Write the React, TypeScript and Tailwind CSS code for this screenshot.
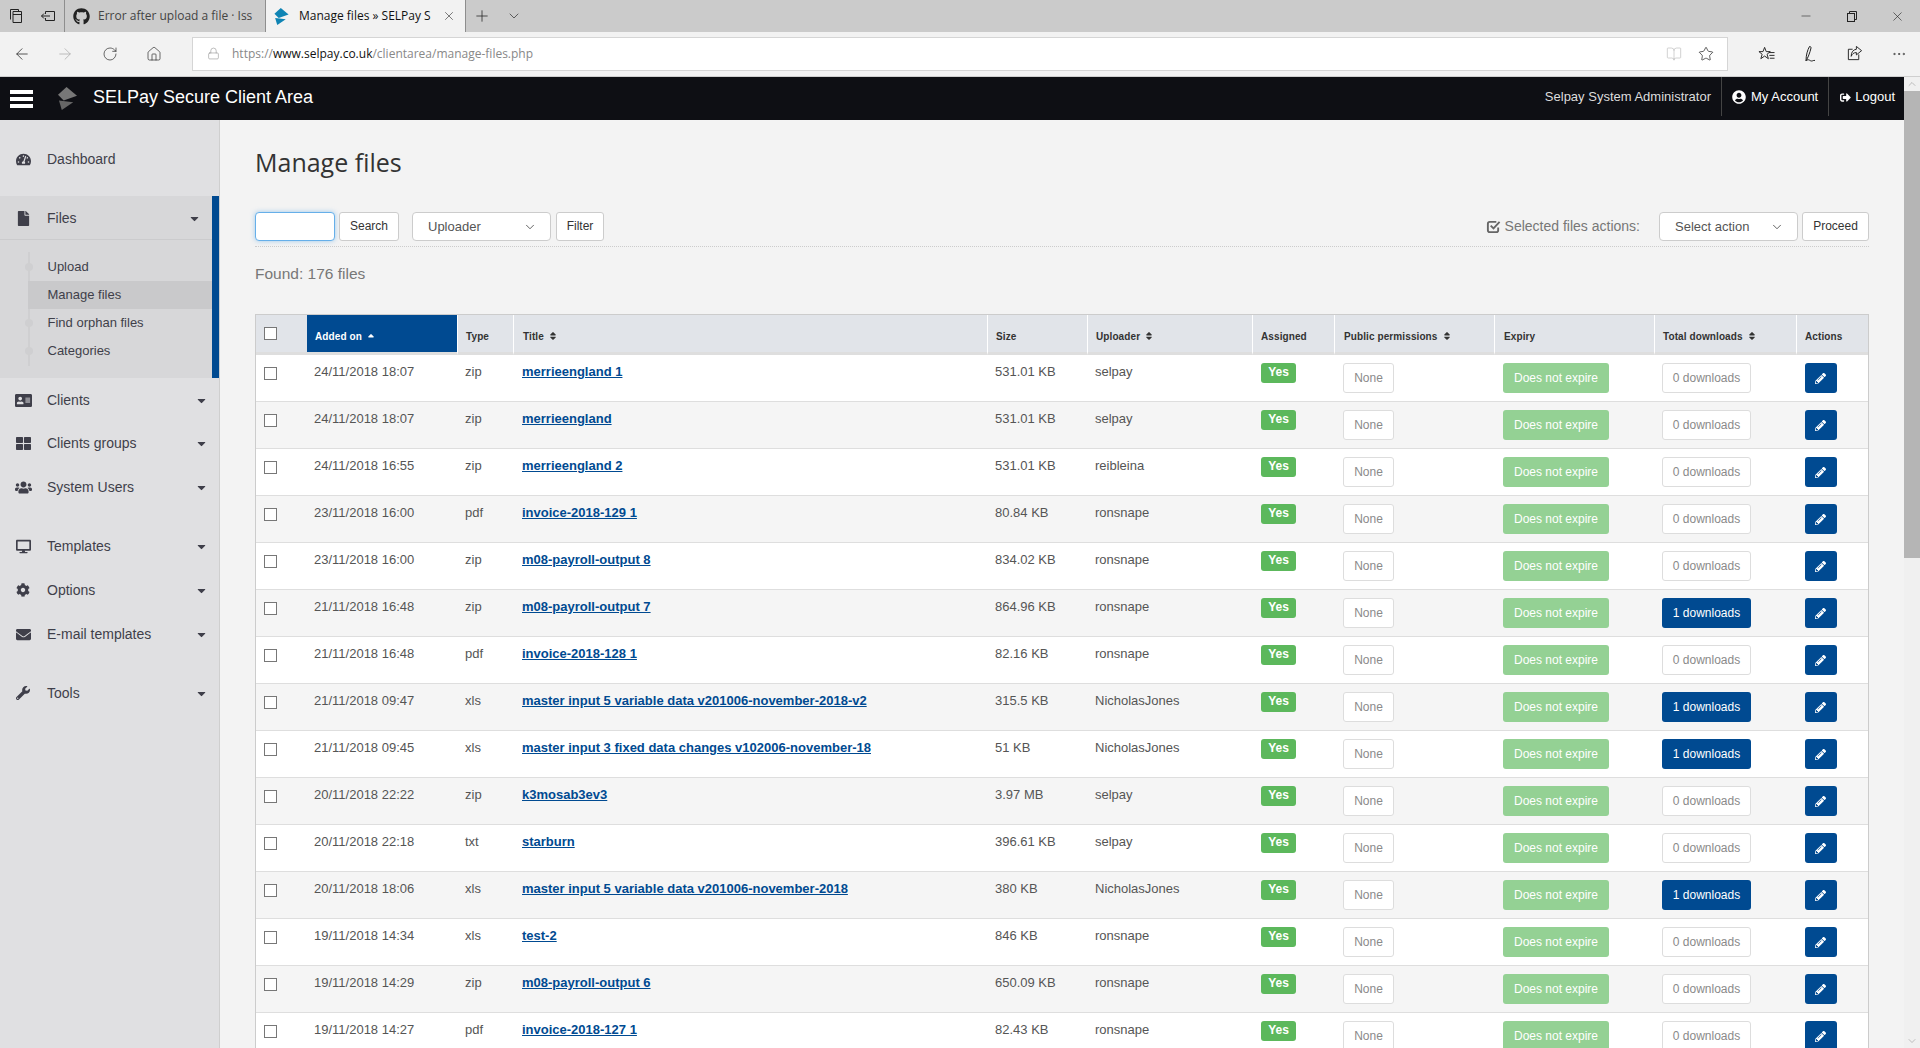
import {
  FaAddressCard,
  FaCaretDown,
  FaCog,
  FaDesktop,
  FaEnvelope,
  FaFile,
  FaGithub,
  FaPencilAlt,
  FaSort,
  FaSortUp,
  FaTachometerAlt,
  FaThLarge,
  FaUserCircle,
  FaUsers,
  FaWrench,
  FaSignOutAlt,
} from "react-icons/fa";
import {
  ArrowLeft,
  ArrowRight,
  BookOpen,
  ChevronDown,
  ChevronUp,
  Home,
  Lock,
  Minus,
  MoreHorizontal,
  Plus,
  RotateCw,
  Star,
  X,
} from "lucide-react";

const files = [
  ["24/11/2018 18:07", "zip", "merrieengland 1", "531.01 KB", "selpay", 0],
  ["24/11/2018 18:07", "zip", "merrieengland", "531.01 KB", "selpay", 0],
  ["24/11/2018 16:55", "zip", "merrieengland 2", "531.01 KB", "reibleina", 0],
  ["23/11/2018 16:00", "pdf", "invoice-2018-129 1", "80.84 KB", "ronsnape", 0],
  ["23/11/2018 16:00", "zip", "m08-payroll-output 8", "834.02 KB", "ronsnape", 0],
  ["21/11/2018 16:48", "zip", "m08-payroll-output 7", "864.96 KB", "ronsnape", 1],
  ["21/11/2018 16:48", "pdf", "invoice-2018-128 1", "82.16 KB", "ronsnape", 0],
  ["21/11/2018 09:47", "xls", "master input 5 variable data v201006-november-2018-v2", "315.5 KB", "NicholasJones", 1],
  ["21/11/2018 09:45", "xls", "master input 3 fixed data changes v102006-november-18", "51 KB", "NicholasJones", 1],
  ["20/11/2018 22:22", "zip", "k3mosab3ev3", "3.97 MB", "selpay", 0],
  ["20/11/2018 22:18", "txt", "starburn", "396.61 KB", "selpay", 0],
  ["20/11/2018 18:06", "xls", "master input 5 variable data v201006-november-2018", "380 KB", "NicholasJones", 1],
  ["19/11/2018 14:34", "xls", "test-2", "846 KB", "ronsnape", 0],
  ["19/11/2018 14:29", "zip", "m08-payroll-output 6", "650.09 KB", "ronsnape", 0],
  ["19/11/2018 14:27", "pdf", "invoice-2018-127 1", "82.43 KB", "ronsnape", 0],
] as const;

function Logo({ className, top, bottom }: { className: string; top: string; bottom: string }) {
  return (
    <svg viewBox="0 0 20 24" className={className}>
      <polygon points="9,0 20,9 6,14 0,8" fill={top} />
      <polygon points="1,14 16,16 4,24" fill={bottom} />
    </svg>
  );
}

// thin outline glyphs of the browser's own toolbar
function TabsIcon() {
  return (
    <svg viewBox="0 0 16 16" className="h-[16px] w-[16px]" fill="none" stroke="#222" strokeWidth="1">
      <path d="M2.5 11.5v-10h8v2" />
      <path d="M5 13v-9.5h8.5v11H5z" />
      <path d="M5 6.5h8.5" />
    </svg>
  );
}

function SetAsideIcon() {
  return (
    <svg viewBox="0 0 16 16" className="h-[16px] w-[16px]" fill="none" stroke="#222" strokeWidth="1">
      <path d="M5.5 3.5h9v9h-9V10" />
      <path d="M5.5 3.5V6" />
      <path d="M10 8H1.5M4 5.5 1.5 8 4 10.5" />
    </svg>
  );
}

function RestoreIcon() {
  return (
    <svg viewBox="0 0 12 12" className="h-[12px] w-[12px]" fill="none" stroke="#222" strokeWidth="1">
      <rect x="1.5" y="3.5" width="7" height="8" />
      <path d="M3.5 3.5v-2h7v8h-2" />
    </svg>
  );
}

function FavoritesIcon() {
  return (
    <svg viewBox="0 0 18 18" className="h-[17px] w-[17px]" fill="none" stroke="#222" strokeWidth="1">
      <path d="M7 2.5 8.7 7H13l-3.4 2.8L11 14.5 7 11.700 3 14.5l1.4-4.7L1 7h4.3z" />
      <path d="M11.5 8h6M12 11h5.5M12.5 14h5" />
    </svg>
  );
}

function NoteIcon() {
  return (
    <svg viewBox="0 0 18 18" className="h-[18px] w-[18px]" fill="none" stroke="#222" strokeWidth="1">
      <path d="M7.5 1.5C5.5 5 4 10 4 16c2-3.5 4-8.5 5-13 .2-1-1-2-1.5-1.5z" />
      <path d="M5 15c2-1 3 1 4.5 1 1.5 0 2-1 3.5-.5" />
    </svg>
  );
}

function ShareIcon() {
  return (
    <svg viewBox="0 0 18 18" className="h-[17px] w-[17px]" fill="none" stroke="#222" strokeWidth="1">
      <path d="M7 4.5H2.500v11h11V10" />
      <path d="M11 1.5 16.500 6 11 10.500V8C8 8 6.500 9.500 5.500 12c0-4.500 2-7 5.500-7.500z" />
    </svg>
  );
}

function CheckSquareIcon() {
  return (
    <svg viewBox="0 0 16 16" className="mr-[4px] h-[15px] w-[15px]" fill="none" stroke="#666" strokeWidth="2">
      <path d="M13 9v3a2 2 0 0 1-2 2H4a2 2 0 0 1-2-2V5a2 2 0 0 1 2-2h7" />
      <path d="M5 7l3 3 6.500-7" />
    </svg>
  );
}

function NavItem({
  icon,
  label,
  height = "h-[44px]",
  iconSize = "text-[15px]",
}: {
  icon: React.ReactNode;
  label: string;
  height?: string;
  iconSize?: string;
}) {
  return (
    <div className={`flex items-center text-[14px] text-[#3f3f4a] ${height}`}>
      <span className={`flex w-[47px] justify-center pr-[1px] ${iconSize}`}>{icon}</span>
      <span className="flex-1">{label}</span>
      {label !== "Dashboard" && <FaCaretDown className="mr-[11px] text-[13px] text-[#3f3f4a]" />}
    </div>
  );
}

function SubItem({ label, active = false }: { label: string; active?: boolean }) {
  return (
    <div
      className={`relative flex h-[28px] items-center text-[13px] text-[#3f3f4a] ${active ? "-ml-[2px] bg-[#c9c9cb] pl-[19.500px]" : "pl-[17.500px]"}`}
    >
      {!active && <span className="absolute left-[-5px] h-[8px] w-[8px] rounded-full bg-[#cfcfd1]" />}
      {label}
    </div>
  );
}

function Sidebar() {
  return (
    <aside className="w-[220px] shrink-0 border-r border-[#cfcfcf] bg-[#e0e0e2] pt-[17px]">
      <NavItem icon={<FaTachometerAlt />} label="Dashboard" />
      <div className="mt-[15px] h-[182px] border-r-[7px] border-[#004a91] bg-[#d7d7d9]">
        <div className="flex h-[44px] items-center border-b border-[#cbcbcd] pt-[1px] text-[14px] text-[#3f3f4a]">
          <span className="flex w-[47px] justify-center pr-[1px] text-[15px]">
            <FaFile />
          </span>
          <span className="flex-1">Files</span>
          <FaCaretDown className="mr-[11px] text-[13px]" />
        </div>
        <div className="ml-[28px] mt-[12px] border-l-2 border-[#cfcfd1] py-[1px]">
          <SubItem label="Upload" />
          <SubItem label="Manage files" active />
          <SubItem label="Find orphan files" />
          <SubItem label="Categories" />
        </div>
      </div>
      <NavItem icon={<FaAddressCard />} label="Clients" height="h-[43px] pt-[2px]" iconSize="text-[17px]" />
      <NavItem icon={<FaThLarge />} label="Clients groups" />
      <NavItem icon={<FaUsers />} label="System Users" iconSize="text-[17px]" />
      <div className="h-[15px]" />
      <NavItem icon={<FaDesktop />} label="Templates" />
      <NavItem icon={<FaCog />} label="Options" iconSize="text-[14px]" />
      <NavItem icon={<FaEnvelope />} label="E-mail templates" />
      <div className="h-[15px]" />
      <NavItem icon={<FaWrench />} label="Tools" iconSize="text-[14px]" />
    </aside>
  );
}

function SelectBox({ label }: { label: string }) {
  return (
    <div className="flex h-[29px] w-[139px] items-center justify-between rounded-[4px] border border-[#ccc] bg-white pl-[15px] pr-[13px] text-[13px] text-[#555]">
      {label}
      <ChevronDown size={14} strokeWidth={1.2} className="text-[#222]" />
    </div>
  );
}

function Btn({ label, className }: { label: string; className: string }) {
  return (
    <button
      className={`flex h-[29px] items-center justify-center rounded-[3px] border border-[#ccc] bg-white pb-[2px] text-[12px] text-[#333] ${className}`}
    >
      {label}
    </button>
  );
}

function Th({
  label,
  sort = false,
  className = "pl-[8px]",
}: {
  label: string;
  sort?: boolean;
  className?: string;
}) {
  return (
    <th
      className={`h-[40px] border-b-[3px] border-r border-b-[#dedede] border-r-white bg-[#e1e4e9] pt-[5px] text-left text-[10px] font-bold tracking-[0.1px] text-[#333] ${className}`}
    >
      <span className="inline-flex items-center gap-[4px]">
        {label}
        {sort && <FaSort className="text-[10px]" />}
      </span>
    </th>
  );
}

function FilesTable() {
  return (
    <div className="border-x border-t border-[#ccc]">
      <table className="w-full table-fixed border-separate border-spacing-0">
        <colgroup>
          <col className="w-[51px]" />
          <col className="w-[151px]" />
          <col className="w-[56px]" />
          <col className="w-[474px]" />
          <col className="w-[100px]" />
          <col className="w-[165px]" />
          <col className="w-[82px]" />
          <col className="w-[160px]" />
          <col className="w-[160px]" />
          <col className="w-[142px]" />
          <col className="w-[71px]" />
        </colgroup>
        <thead>
          <tr>
            <th className="h-[40px] border-b-[3px] border-b-[#dedede] bg-[#e1e4e9] pl-[8px] text-left">
              <div className="h-[13px] w-[13px] border border-[#777] bg-white" />
            </th>
            <th className="h-[40px] border-b-[3px] border-r border-b-[#dedede] border-r-white bg-[#004a91] pl-[8px] pt-[5px] text-left text-[10px] font-bold tracking-[0.1px] text-white">
              <span className="inline-flex items-center gap-[4px]">
                Added on
                <FaSortUp className="mt-[3px] text-[10px]" />
              </span>
            </th>
            <Th label="Type" />
            <Th label="Title" sort className="pl-[9px]" />
            <Th label="Size" />
            <Th label="Uploader" sort />
            <Th label="Assigned" />
            <Th label="Public permissions" sort className="pl-[9px]" />
            <Th label="Expiry" className="pl-[9px]" />
            <Th label="Total downloads" sort />
            <Th label="Actions" className="border-r-0 pl-[8px]" />
          </tr>
        </thead>
        <tbody>
          {files.map((file, index) => (
            <tr
              key={index}
              className={`text-[13px] leading-[18px] text-[#555] ${index % 2 ? "bg-[#f5f5f5]" : "bg-white"}`}
            >
              <td className="border-b border-[#dedede] px-[8px] pt-[12px] align-top">
                <div className="h-[13px] w-[13px] border border-[#777] bg-white" />
              </td>
              <td className="border-b border-[#dedede] px-[7px] py-[8px] align-top">{file[0]}</td>
              <td className="border-b border-[#dedede] px-[7px] py-[8px] align-top">{file[1]}</td>
              <td className="border-b border-[#dedede] px-[8px] py-[8px] align-top font-bold text-[#004a91] underline">
                {file[2]}
              </td>
              <td className="border-b border-[#dedede] px-[7px] py-[8px] align-top">{file[3]}</td>
              <td className="border-b border-[#dedede] px-[7px] py-[8px] align-top">{file[4]}</td>
              <td className="border-b border-[#dedede] px-[8px] py-[8px] align-top">
                <span className="flex h-[20px] w-[35px] items-center justify-center rounded-[3px] bg-[#5cb85c] pb-[2px] text-[12px] font-bold text-white">
                  Yes
                </span>
              </td>
              <td className="border-b border-[#dedede] px-[8px] py-[8px] align-top">
                <span className="flex h-[30px] w-[51px] items-center justify-center rounded-[3px] border border-[#ddd] bg-white text-[12px] text-[#8a8a8a]">
                  None
                </span>
              </td>
              <td className="border-b border-[#dedede] px-[8px] py-[8px] align-top">
                <span className="flex h-[30px] w-[106px] items-center justify-center rounded-[3px] bg-[#94d194] text-[12px] text-white">
                  Does not expire
                </span>
              </td>
              <td className="border-b border-[#dedede] px-[7px] py-[8px] align-top">
                {file[5] ? (
                  <span className="flex h-[30px] w-[89px] items-center justify-center rounded-[3px] bg-[#004a91] text-[12px] text-white">
                    1 downloads
                  </span>
                ) : (
                  <span className="flex h-[30px] w-[89px] items-center justify-center rounded-[3px] border border-[#ddd] bg-white text-[12px] text-[#8a8a8a]">
                    0 downloads
                  </span>
                )}
              </td>
              <td className="border-b border-[#dedede] px-[8px] py-[8px] align-top">
                <span className="flex h-[30px] w-[32px] items-center justify-center rounded-[3px] bg-[#004a91] pr-[1px] text-[11px] text-white">
                  <FaPencilAlt />
                </span>
              </td>
            </tr>
          ))}
        </tbody>
      </table>
    </div>
  );
}

function BrowserChrome() {
  return (
    <>
      <div className="flex h-[32px] shrink-0 items-center bg-[#cbcbcb] text-[12px] text-[#222] font-['Open_Sans',sans-serif]">
        <div className="flex h-full w-[65px] items-center gap-[16px] border-r border-[#8e8e8e] pl-[8px]">
          <TabsIcon />
          <SetAsideIcon />
        </div>
        <div className="flex h-full w-[200px] items-center gap-[8px] pl-[8px] pr-[8px]">
          <FaGithub className="shrink-0 text-[17px] text-[#222]" />
          <span className="whitespace-nowrap text-[#444]">Error after upload a file · Iss</span>
        </div>
        <div className="flex h-full w-[201px] items-center gap-[10px] border-x border-[#8e8e8e] bg-[#f2f2f2] pl-[8px] pr-[9px]">
          <Logo className="h-[17px] w-[15px] shrink-0" top="#0f84b4" bottom="#0f84b4" />
          <span className="flex-1 whitespace-nowrap text-[#111]">Manage files » SELPay S</span>
          <X size={14} strokeWidth={1} />
        </div>
        <Plus size={18} strokeWidth={1} className="ml-[7px]" />
        <ChevronDown size={16} strokeWidth={1} className="ml-[15px]" />
        <div className="flex-1" />
        <Minus size={14} strokeWidth={1} className="mr-[33px]" />
        <div className="mr-[32px]">
          <RestoreIcon />
        </div>
        <X size={15} strokeWidth={1} className="mr-[15px]" />
      </div>
      <div className="flex h-[45px] shrink-0 items-center border-b border-[#cfcfcf] bg-[#f2f2f2] pb-[1px] text-[#222]">
        <ArrowLeft size={18} strokeWidth={1} className="ml-[13px]" />
        <ArrowRight size={18} strokeWidth={1} className="ml-[25px] text-[#aaa]" />
        <RotateCw size={16} strokeWidth={1} className="ml-[28px]" />
        <Home size={16} strokeWidth={1} className="ml-[28px]" />
        <div className="ml-[30px] flex h-[34px] w-[1536px] items-center border border-[#d5d5d5] bg-white pl-[14px] pr-[13px] text-[12px] text-[#888] font-['Open_Sans',sans-serif]">
          <Lock size={13} strokeWidth={1} className="mr-[12px]" />
          <span className="pt-[1px]">
            https://<span className="text-[#111]">www.selpay.co.uk</span>/clientarea/manage-files.php
          </span>
          <div className="flex-1" />
          <BookOpen size={16} strokeWidth={1} className="mr-[16px] text-[#bbb]" />
          <Star size={16} strokeWidth={1} className="text-[#111]" />
        </div>
        <div className="ml-[30px]">
          <FavoritesIcon />
        </div>
        <div className="ml-[27px]">
          <NoteIcon />
        </div>
        <div className="ml-[26px]">
          <ShareIcon />
        </div>
        <MoreHorizontal size={16} strokeWidth={1} className="ml-[28px]" />
      </div>
    </>
  );
}

export default function App() {
  return (
    <div className="flex h-screen w-full flex-col overflow-hidden bg-[#f3f3f3] font-['Liberation_Sans',Arial,sans-serif]">
      <BrowserChrome />
      <div className="flex min-h-0 flex-1">
        <div className="flex min-w-0 flex-1 flex-col">
          {/* Top bar */}
          <header className="flex h-[43px] shrink-0 items-center bg-[#0e0f14] text-white">
            <div className="ml-[10px] flex w-[23px] flex-col gap-[3px]">
              <span className="h-[4px] bg-white" />
              <span className="h-[4px] bg-white" />
              <span className="h-[4px] bg-white" />
            </div>
            <Logo className="ml-[25px] h-[23px] w-[19px]" top="#777" bottom="#666" />
            <span className="ml-[16px] pb-[3px] text-[18px]">SELPay Secure Client Area</span>
            <div className="flex-1" />
            <span className="pb-[3px] pr-[10px] text-[13px] text-[#ddd]">Selpay System Administrator</span>
            <div className="flex h-[39px] items-center gap-[5px] self-start border-x border-[#444] px-[10px] text-[13px]">
              <FaUserCircle className="text-[14px]" /> My Account
            </div>
            <div className="flex items-center gap-[4px] pb-[3px] pl-[11px] pr-[9px] text-[13px]">
              <FaSignOutAlt className="text-[11px]" /> Logout
            </div>
          </header>

          <div className="flex min-h-0 flex-1">
            <Sidebar />
            <main className="min-w-0 flex-1 px-[35px]">
              <h1 className="mt-[24px] text-[25px] leading-[36px] text-[#333] font-['Open_Sans',sans-serif]">
                Manage files
              </h1>
              <div className="mt-[32px] flex items-center border-b border-dotted border-[#ccc] pb-[5px]">
                <div className="h-[29px] w-[80px] rounded-[4px] border border-[#66afe9] bg-white shadow-[0_0_5px_rgba(102,175,233,0.6)]" />
                <Btn label="Search" className="ml-[4px] w-[60px]" />
                <div className="ml-[13px]">
                  <SelectBox label="Uploader" />
                </div>
                <Btn label="Filter" className="ml-[5px] w-[48px]" />
                <div className="flex-1" />
                <CheckSquareIcon />
                <span className="mr-[19px] text-[14px] text-[#777]">Selected files actions:</span>
                <SelectBox label="Select action" />
                <Btn label="Proceed" className="ml-[4px] w-[67px]" />
              </div>
              <p className="mt-[17px] text-[15.5px] leading-[20px] text-[#777]">Found: 176 files</p>
              <div className="mt-[30px]">
                <FilesTable />
              </div>
            </main>
          </div>
        </div>

        {/* Window scrollbar */}
        <div className="flex w-[16px] shrink-0 flex-col items-center bg-[#f0f0f0]">
          <ChevronUp size={12} strokeWidth={1} className="my-[1px] text-[#888]" />
          <div className="h-[467px] w-full bg-[#b5b5b5]" />
          <div className="flex-1" />
          <ChevronDown size={12} strokeWidth={1} className="my-[1px] text-[#888]" />
        </div>
      </div>
    </div>
  );
}
